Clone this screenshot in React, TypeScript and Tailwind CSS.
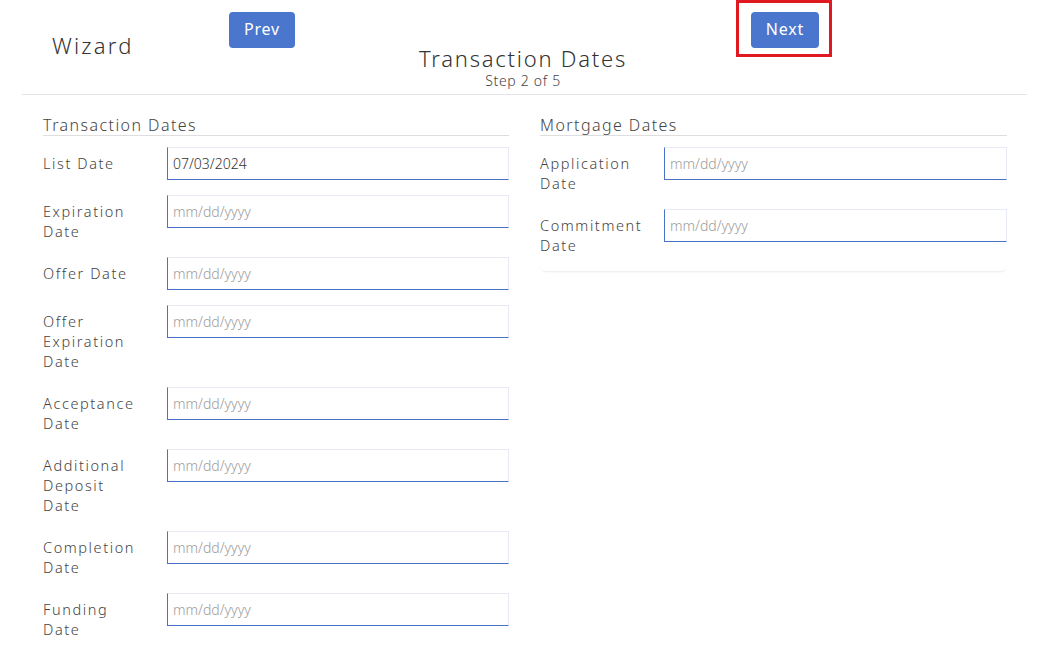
import React from "react"

const font = { fontFamily: '"Noto Sans", "Open Sans", sans-serif' }

interface FieldProps {
  label: string
  value?: string
}

function DateField({ label, value }: FieldProps) {
  return (
    <div className="flex items-start mb-[15px]">
      <label className="w-[124px] shrink-0 pt-[6px] pb-[1px] pr-[21.5px] text-[14.5px] font-light leading-[20px] tracking-[0.11em] text-[#444]">
        {label}
      </label>
      <input
        type="text"
        defaultValue={value}
        placeholder="mm/dd/yyyy"
        className="flex-1 min-w-0 h-[33px] pl-[5px] text-[14px] font-light text-[#333] placeholder:text-[#9c9c9c] border border-t-[#e8eaf6] border-r-[#e8eaf6] border-l-[#4a72c4] border-b-[#4a72c4] outline-none bg-white"
        style={font}
      />
    </div>
  )
}

function SectionHeading({ children }: { children: React.ReactNode }) {
  return (
    <h3 className="text-[16px] font-light leading-[20px] tracking-[0.09em] text-[#444] border-b border-[#dedede] mb-[11px]">
      {children}
    </h3>
  )
}

export default function App() {
  const transactionFields: FieldProps[] = [
    { label: "List Date", value: "07/03/2024" },
    { label: "Expiration Date" },
    { label: "Offer Date" },
    { label: "Offer Expiration Date" },
    { label: "Acceptance Date" },
    { label: "Additional Deposit Date" },
    { label: "Completion Date" },
    { label: "Funding Date" },
  ]
  const mortgageFields: FieldProps[] = [{ label: "Application Date" }, { label: "Commitment Date" }]

  return (
    <div className="min-h-[650px] bg-white" style={font}>
      <div className="ml-[22px] w-[1005px]">
        <div className="flex items-start pt-[12px] pb-[4px] border-b border-[#e4e4e4]">
          <div className="w-[207px] shrink-0 pl-[30px] mt-[19px] text-[22px] font-light leading-[28px] tracking-[0.1em] text-[#333]">
            Wizard
          </div>
          <button className="h-[36px] w-[66px] pb-[2px] rounded-[4px] bg-[#4a76cd] text-white text-[16px] tracking-[0.05em]">
            Prev
          </button>
          <div className="w-[456px] shrink-0 mt-[32px] text-center">
            <div className="text-[22px] font-light leading-[28px] tracking-[0.08em] text-[#333]">Transaction Dates</div>
            <div className="text-[14px] font-light leading-[18px] tracking-[0.05em] text-[#444]">Step 2 of 5</div>
          </div>
          <button className="relative h-[36px] w-[68px] pb-[2px] rounded-[4px] bg-[#4a76cd] text-white text-[16px] tracking-[0.05em]">
            Next
            <span className="absolute -left-[15px] -right-[13px] -top-[12px] -bottom-[9px] border-[3px] border-[#e0181f] pointer-events-none" />
          </button>
        </div>

        <div className="grid grid-cols-[466px_467px] gap-[31px] px-[21px] pt-[20px]">
          <div>
            <SectionHeading>Transaction Dates</SectionHeading>
            {transactionFields.map((f) => (
              <DateField key={f.label} label={f.label} value={f.value} />
            ))}
          </div>
          <div className="self-start rounded-[6px] shadow-[0_2px_2px_-1px_rgba(0,0,0,0.08)]">
            <SectionHeading>Mortgage Dates</SectionHeading>
            {mortgageFields.map((f) => (
              <DateField key={f.label} label={f.label} />
            ))}
          </div>
        </div>
      </div>
    </div>
  )
}
